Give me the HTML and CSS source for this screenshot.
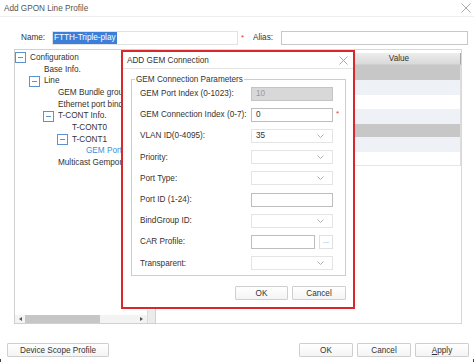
FILE: index.html
```html
<!DOCTYPE html>
<html lang="en">
  <head>
    <meta charset="UTF-8" />
    <title>Add GPON Line Profile</title>
    <link rel="stylesheet" href="styles.css">
  </head>
  <body>
    <div class="window">
      <div class="titlebar">
        <span>Add GPON Line Profile</span>
        <svg class="close" width="10" height="10" viewBox="0 0 10 10"><path d="M0.5 0.5L9.5 9.5M9.5 0.5L0.5 9.5" /></svg>
      </div>

      <div class="name-row">
        <label class="lbl-name">Name:</label>
        <div class="name-input"><span class="sel">FTTH-Triple-play</span></div>
        <span class="req">*</span>
        <label class="lbl-alias">Alias:</label>
        <div class="alias-input"></div>
      </div>

      <div class="main">
        <div class="tree-panel">
          <ul class="tree">
            <li class="node d0"><span class="toggle"></span>Configuration</li>
            <li class="leaf d1">Base Info.</li>
            <li class="node d1"><span class="toggle"></span>Line</li>
            <li class="leaf d2">GEM Bundle group</li>
            <li class="leaf d2">Ethernet port binding</li>
            <li class="node d2"><span class="toggle"></span>T-CONT Info.</li>
            <li class="leaf d3">T-CONT0</li>
            <li class="node d3"><span class="toggle"></span>T-CONT1</li>
            <li class="leaf d4 active">GEM Port</li>
            <li class="leaf d2">Multicast Gemport</li>
          </ul>
          <div class="hscroll">
            <span class="arrow left"></span>
            <span class="thumb"></span>
            <span class="track"></span>
            <span class="arrow right"></span>
            <span class="corner"></span>
          </div>
        </div>
        <div class="table-panel">
          <div class="thead">
            <div class="col-key"></div>
            <div class="col-val">Value</div>
          </div>
          <div class="row grey h15"></div>
          <div class="row light h15"></div>
          <div class="row h14"></div>
          <div class="row light h15"></div>
          <div class="row grey h13"></div>
          <div class="row light h15"></div>
          <div class="row h14 last"></div>
        </div>
      </div>

      <div class="footer">
        <button class="btn wide">Device Scope Profile</button>
        <div class="spacer"></div>
        <button class="btn">OK</button>
        <button class="btn">Cancel</button>
        <button class="btn"><u>A</u>pply</button>
      </div>

      <div class="dialog">
        <div class="dlg-title">
          <span>ADD GEM Connection</span>
          <svg class="close" width="9" height="9" viewBox="0 0 9 9"><path d="M0.5 0.5L8.5 8.5M8.5 0.5L0.5 8.5" /></svg>
        </div>
        <div class="group">
          <span class="group-title">GEM Connection Parameters</span>
          <div class="form">
            <label>GEM Port Index (0-1023):</label>
            <div class="field disabled">10</div>
            <span></span>

            <label>GEM Connection Index (0-7):</label>
            <div class="field text">0</div>
            <span class="req">*</span>

            <label>VLAN ID(0-4095):</label>
            <div class="field select">35<svg class="chev" width="7" height="4" viewBox="0 0 7 4"><path d="M0.5 0.5L3.5 3.5L6.5 0.5" /></svg></div>
            <span></span>

            <label>Priority:</label>
            <div class="field select"><svg class="chev" width="7" height="4" viewBox="0 0 7 4"><path d="M0.5 0.5L3.5 3.5L6.5 0.5" /></svg></div>
            <span></span>

            <label>Port Type:</label>
            <div class="field select"><svg class="chev" width="7" height="4" viewBox="0 0 7 4"><path d="M0.5 0.5L3.5 3.5L6.5 0.5" /></svg></div>
            <span></span>

            <label>Port ID (1-24):</label>
            <div class="field text"></div>
            <span></span>

            <label>BindGroup ID:</label>
            <div class="field select"><svg class="chev" width="7" height="4" viewBox="0 0 7 4"><path d="M0.5 0.5L3.5 3.5L6.5 0.5" /></svg></div>
            <span></span>

            <label>CAR Profile:</label>
            <div class="field-pair">
              <div class="field text short"></div>
              <div class="dots">...</div>
            </div>
            <span></span>

            <label>Transparent:</label>
            <div class="field select"><svg class="chev" width="7" height="4" viewBox="0 0 7 4"><path d="M0.5 0.5L3.5 3.5L6.5 0.5" /></svg></div>
            <span></span>
          </div>
        </div>
        <div class="dlg-buttons">
          <button class="btn ok">OK</button>
          <button class="btn">Cancel</button>
        </div>
      </div>
    </div>
  </body>
</html>
```

FILE: styles.css
```css
* {
  box-sizing: border-box;
}
html, body {
  margin: 0;
  padding: 0;
  background: #fff;
}
body {
  font-family: "Liberation Sans", Arial, sans-serif;
  font-size: 8.2px;
  color: #333;
}
.window {
  position: relative;
  width: 474px;
  height: 362px;
  overflow: hidden;
  background: #fff;
}
/* little frame ticks at the bottom corners */
.window::before,
.window::after {
  content: "";
  position: absolute;
  bottom: 0;
  width: 1px;
  height: 3px;
  background: #444;
}
.window::before {
  left: 0;
}
.window::after {
  right: 0;
}
.close path {
  stroke: #aaa;
  stroke-width: 1;
  fill: none;
}

/* title */
.titlebar {
  height: 17px;
  display: flex;
  align-items: center;
  justify-content: space-between;
  padding: 0 3px 0 4px;
  border-bottom: 1px solid #eee;
  color: #555;
}

/* name row */
.name-row {
  display: flex;
  align-items: center;
  height: 15px;
  margin-top: 13px;
}
.lbl-name {
  width: 52px;
  padding-left: 21px;
}
.name-input {
  width: 186px;
  height: 14px;
  border: 1px solid #e2e2e2;
  display: flex;
  align-items: center;
}
.sel {
  background: #3b7fd9;
  color: #fff;
  line-height: 12px;
  padding: 0 1px;
}
.req {
  color: #e23a3a;
  font-size: 8px;
}
.name-row .req {
  width: 15px;
  padding-left: 3px;
}
.lbl-alias {
  width: 28px;
}
.alias-input {
  width: 187px;
  height: 14px;
  border: 1px solid #c8c8c8;
}

/* main area */
.main {
  display: flex;
  height: 275px;
  margin: 4px 0 0 14px;
  width: 448px;
}
.tree-panel {
  width: 142px;
  border: 1px solid #d0d0d0;
  display: flex;
  flex-direction: column;
}
.tree {
  flex: 1;
  list-style: none;
  margin: 0;
  padding: 2px 0 0 0;
  overflow: hidden;
  white-space: nowrap;
}
.tree li {
  height: 11.67px;
  line-height: 11.67px;
  display: flex;
  align-items: center;
}
.toggle {
  width: 11px;
  height: 11px;
  border: 1px solid #5b93cf;
  margin-right: 4px;
  position: relative;
  flex: none;
}
.toggle::after {
  content: "";
  position: absolute;
  left: 2px;
  right: 2px;
  top: 4px;
  height: 1px;
  background: #5b93cf;
}
.node.d0 { padding-left: 0; }
.node.d1 { padding-left: 14px; }
.node.d2 { padding-left: 28px; }
.node.d3 { padding-left: 42px; }
.leaf.d1 { padding-left: 29px; }
.leaf.d2 { padding-left: 43px; }
.leaf.d3 { padding-left: 57px; }
.leaf.d4 { padding-left: 71px; }
.tree .active {
  color: #3c8ed8;
}
.hscroll {
  height: 8px;
  display: flex;
  align-items: center;
  background: #f3f3f3;
}
.arrow {
  width: 10px;
  height: 8px;
  position: relative;
  flex: none;
}
.arrow::after {
  content: "";
  position: absolute;
  top: 2px;
  border-top: 2px solid transparent;
  border-bottom: 2px solid transparent;
}
.arrow.left::after {
  left: 4px;
  border-right: 3px solid #555;
}
.arrow.right::after {
  left: 3px;
  border-left: 3px solid #555;
}
.thumb {
  width: 75px;
  height: 8px;
  background: #c6c6c6;
  flex: none;
}
.track {
  flex: 1;
}
.corner {
  width: 8px;
  height: 13px;
  margin-top: -5px;
  background: #ececec;
  border-left: 1px solid #dcdcdc;
  flex: none;
}

/* table */
.table-panel {
  flex: 1;
  border: 1px solid #d8d8d8;
  border-left: none;
}
.thead {
  display: flex;
  height: 12px;
  margin-top: 3px;
  background: linear-gradient(#ededed, #d9d9d9);
  border-right: 1px solid #a8a8a8;
  border-bottom: 1px solid #cfcfcf;
}
.col-key {
  width: 182px;
}
.col-val {
  flex: 1;
  text-align: center;
  line-height: 12px;
}
.row {
  border-right: 1px solid #dcdcdc;
}
.row.grey { background: #c7c7c7; }
.row.light { background: #eef2f7; }
.row.last { border-bottom: 1px solid #e6e6e6; }
.h13 { height: 13px; }
.h14 { height: 14px; }
.h15 { height: 15px; }

/* footer */
.footer {
  display: flex;
  height: 14px;
  margin-top: 19px;
  padding: 0 5px 0 7px;
  gap: 4px;
}
.spacer {
  flex: 1;
}
.btn {
  font-family: inherit;
  font-size: 8.2px;
  color: #333;
  width: 54px;
  height: 14px;
  padding: 0;
  background: linear-gradient(#fff, #f4f4f4);
  border: 1px solid #cfcfcf;
  border-radius: 1px;
}
.btn.wide {
  width: 102px;
}

/* dialog */
.dialog {
  position: absolute;
  left: 121px;
  top: 50px;
  width: 234px;
  height: 259px;
  background: #fff;
  border: 2px solid #d8282c;
}
.dlg-title {
  height: 17px;
  display: flex;
  align-items: center;
  justify-content: space-between;
  padding: 0 5px 0 4px;
  border-bottom: 1px solid #e4e4e4;
}
.group {
  margin: 10px 7px 0 8px;
  border: 1px solid #cdcdcd;
  padding: 0 0 1px 8px;
  height: 197px;
}
.group-title {
  display: block;
  width: max-content;
  margin: -5px 0 0 -5px;
  padding: 0 1px;
  background: #fff;
  line-height: 10px;
  height: 10px;
}
.form {
  display: grid;
  grid-template-columns: 111px 82px 12px;
  grid-auto-rows: 21.2px;
  align-items: center;
  margin-top: -2px;
}
.field {
  height: 14px;
  display: flex;
  align-items: center;
  justify-content: space-between;
  padding: 0 8px 0 4px;
  border: 1px solid #e4e4e4;
}
.field.disabled {
  background: #d8d8d8;
  border-color: #c4c4c4;
  color: #9a9a9a;
}
.field.text {
  border-color: #bdbdbd;
}
.field .chev {
  margin-left: auto;
}
.chev path {
  stroke: #b0b0b0;
  stroke-width: 1;
  fill: none;
}
.form .req {
  padding-left: 3px;
  margin-top: -3px;
}
.field-pair {
  display: flex;
  gap: 4px;
}
.field.short {
  width: 64px;
}
.dots {
  width: 14px;
  height: 14px;
  border: 1px solid #e0e0e0;
  color: #888;
  text-align: center;
  line-height: 10px;
  font-size: 7px;
}
.dlg-buttons {
  display: flex;
  justify-content: flex-end;
  gap: 4px;
  margin: 10px 7px 0 0;
}
.dlg-buttons .btn {
  height: 14px;
}
.dlg-buttons .ok {
  width: 53px;
}
```
